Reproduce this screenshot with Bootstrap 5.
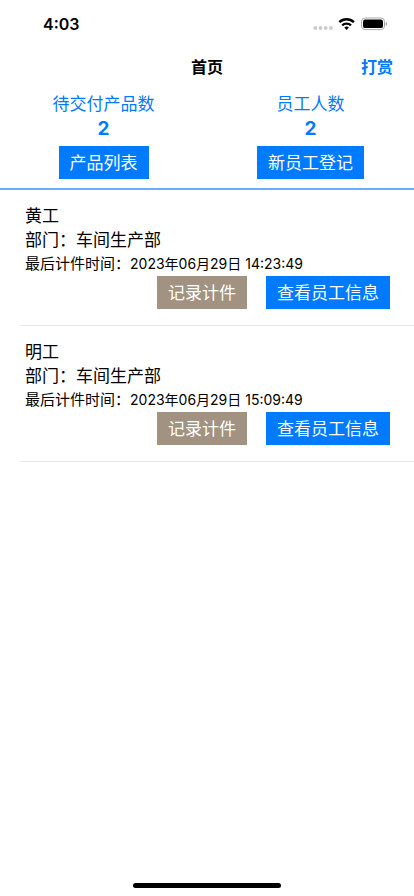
<!DOCTYPE html>
<html lang="zh-CN">
<head>
<meta charset="utf-8">
<meta name="viewport" content="width=device-width, initial-scale=1">
<title>首页</title>
<link rel="stylesheet" href="https://cdn.jsdelivr.net/npm/bootstrap@5.3.0/dist/css/bootstrap.min.css">
<style>
  body { --ios-blue: #007aff; font-family: Inter, "Noto Sans CJK SC", sans-serif; font-size: 17px; line-height: 24px; color: #000; background: #fff; }
  .status-bar { height: 48px; padding: 0 27px 0 43px; }
  .clock { font-size: 16px; font-weight: 600; }
  .title-bar { height: 38px; padding: 0 21px; display: grid; grid-template-columns: 1fr auto 1fr; }
  .title-bar h1 { grid-column: 2; font-size: 16px; line-height: 24px; font-weight: 700; }
  .tip-link { font-size: 16px; font-weight: 700; color: var(--ios-blue); }
  .summary { color: var(--ios-blue); padding: 6px 0 9px; border-bottom: 2px solid #66afff; }
  .total { font-size: 19px; line-height: 26px; font-weight: 700; margin-bottom: 4px; }
  .btn-flat { --bs-btn-font-size: 17px; --bs-btn-line-height: 31px; --bs-btn-padding-x: 11px; --bs-btn-border-width: 0; --bs-btn-color: #fff; --bs-btn-hover-color: #fff; --bs-btn-active-color: #fff; --bs-btn-bg: #007aff; --bs-btn-hover-bg: #006be0; --bs-btn-active-bg: #005fc7; padding-top: 2px; padding-bottom: 0; }
  .btn-taupe { --bs-btn-bg: #a29281; --bs-btn-hover-bg: #918272; --bs-btn-active-bg: #827465; }
  .worker { margin-left: 20px; padding: 14px 24px 16px 5px; border-bottom: 1px solid #e8e8e8; }
  .worker h2 { font-size: 17px; line-height: 24px; font-weight: 400; }
  .last-time { font-size: 15px; line-height: 24px; }
  .last-time time { font-size: 14px; }
  .actions { gap: 19px; }
  .home-bar { width: 148px; height: 5px; margin-bottom: 8px; background: #000; }
</style>
</head>
<body>
<div class="d-flex flex-column min-vh-100">
  <div class="status-bar d-flex align-items-center justify-content-between">
    <span class="clock">4:03</span>
    <svg width="74" height="16" viewBox="0 0 74 16" aria-hidden="true">
      <g fill="#ccc"><circle cx="2.3" cy="12" r="1.9"/><circle cx="7.5" cy="12" r="1.9"/><circle cx="12.7" cy="12" r="1.9"/><circle cx="17.9" cy="12" r="1.9"/></g>
      <g fill="none" stroke="#000" stroke-width="2.4">
        <path d="M26.3 6.1a10.6 10.6 0 0 1 14.6 0"/>
        <path d="M29.2 9.3a6.5 6.5 0 0 1 8.8 0"/>
      </g>
      <path d="M33.6 13.9l-2.3-2.4a3.6 3.6 0 0 1 4.6 0z"/>
      <rect x="48.5" y="2" width="23" height="11.6" rx="3.6" fill="none" stroke="#aaa"/>
      <rect x="50" y="3.5" width="20" height="8.6" rx="2.2"/>
      <path d="M72.7 6.1q1.3.5 1.3 1.8t-1.3 1.8z" fill="#999"/>
    </svg>
  </div>

  <header class="title-bar align-items-center">
    <h1 class="m-0 text-center">首页</h1>
    <a class="tip-link text-decoration-none text-end" href="#">打赏</a>
  </header>

  <section class="summary">
    <div class="row g-0 text-center">
      <div class="col">
        <div>待交付产品数</div>
        <div class="total">2</div>
        <button type="button" class="btn btn-flat rounded-0">产品列表</button>
      </div>
      <div class="col">
        <div>员工人数</div>
        <div class="total">2</div>
        <button type="button" class="btn btn-flat rounded-0">新员工登记</button>
      </div>
    </div>
  </section>

  <main class="flex-grow-1">
    <ul class="list-unstyled m-0">
      <li class="worker">
        <h2 class="m-0">黄工</h2>
        <div>部门：车间生产部</div>
        <div class="last-time">最后计件时间：<time datetime="2023-06-29T14:23:49">2023年06月29日 14:23:49</time></div>
        <div class="actions d-flex justify-content-end">
          <button type="button" class="btn btn-flat btn-taupe rounded-0">记录计件</button>
          <button type="button" class="btn btn-flat rounded-0">查看员工信息</button>
        </div>
      </li>
      <li class="worker">
        <h2 class="m-0">明工</h2>
        <div>部门：车间生产部</div>
        <div class="last-time">最后计件时间：<time datetime="2023-06-29T15:09:49">2023年06月29日 15:09:49</time></div>
        <div class="actions d-flex justify-content-end">
          <button type="button" class="btn btn-flat btn-taupe rounded-0">记录计件</button>
          <button type="button" class="btn btn-flat rounded-0">查看员工信息</button>
        </div>
      </li>
    </ul>
  </main>

  <div class="home-bar align-self-center rounded-pill"></div>
</div>
<script src="https://cdn.jsdelivr.net/npm/bootstrap@5.3.0/dist/js/bootstrap.bundle.min.js"></script>
</body>
</html>
